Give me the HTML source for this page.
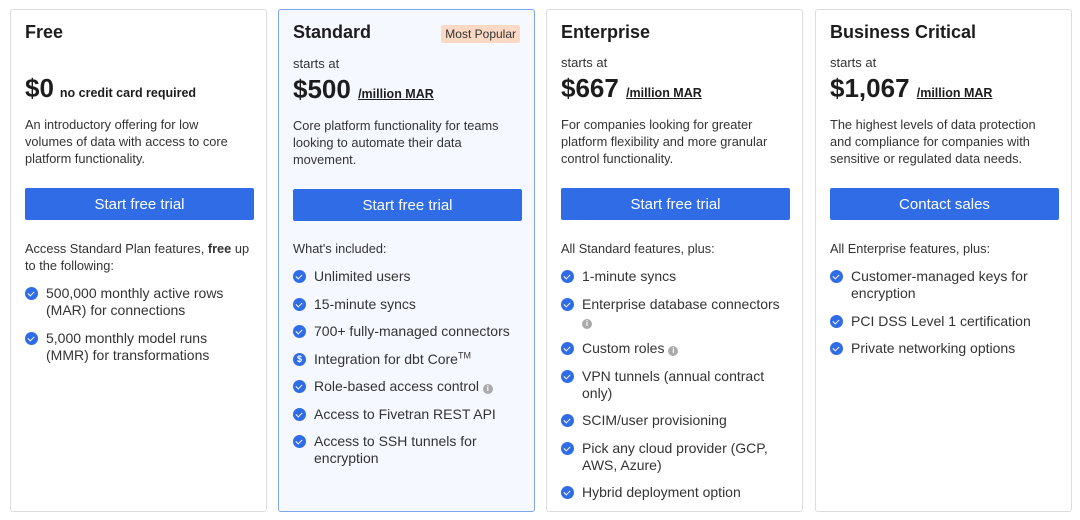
<!DOCTYPE html>
<html><head><meta charset="utf-8"><style>
*{margin:0;padding:0;box-sizing:border-box}
body{width:1080px;height:520px;background:#fff;font-family:"Liberation Sans",sans-serif;color:#222;position:relative;overflow:hidden}
.card{position:absolute;top:9px;width:257px;height:503px;border:1px solid #dcdcdc;border-radius:3px;background:#fff}
.card.pop{background:#f5f8fe;border-color:#7ea6ee}
.card>*{position:absolute;left:14px}
.t{top:12px;font-size:18px;font-weight:bold;color:#1d1d1d}
.sa{top:46px;font-size:13px;color:#333}
.pr{top:64px;font-size:26px;font-weight:bold;color:#1d1d1d;white-space:nowrap}
.pr small{font-size:12.5px;font-weight:bold;margin-left:6px}
.pr u{font-size:12.5px}
.d{top:106px;width:222px;font-size:12.8px;line-height:17px;color:#333}
.b{top:178px;width:229px;height:32px;background:#2f6ce5;color:#fff;border-radius:2px;font-size:15px;text-align:center;line-height:34px}
.h{top:230px;width:232px;font-size:12.8px;line-height:17px;color:#333}
ul{list-style:none;width:222px;font-size:14px;line-height:17px;color:#333}
li{position:relative;padding-left:21px;margin-bottom:10.5px}
li:before{content:"";position:absolute;left:0;top:2px;width:13px;height:13px;border-radius:50%;background:#2f6ce5}
li:after{content:"";position:absolute;left:4px;top:5px;width:3px;height:5px;border:solid #fff;border-width:0 1.6px 1.6px 0;transform:rotate(45deg)}
li.dol:after{content:"$";border:0;transform:none;color:#fff;font-size:9px;font-weight:bold;left:4px;top:2px;width:auto;height:auto;line-height:13px}
sup{font-size:9px;line-height:0}
.i{display:inline-block;width:10px;height:10px;border-radius:50%;background:#aaa;color:#fff;font-size:8px;line-height:10px;text-align:center;font-weight:bold;vertical-align:0}
.badge{left:auto!important;right:14px;top:15px;background:#fbd9c4;font-size:12px;padding:2px 4px;border-radius:2px;color:#333}
</style></head><body>
<div class="card" style="left:10px">
<div class="t">Free</div>
<div class="pr" style="top:63px">$0<small>no credit card required</small></div>
<div class="d">An introductory offering for low volumes of data with access to core platform functionality.</div>
<div class="b">Start free trial</div>
<div class="h">Access Standard Plan features, <b>free</b> up to the following:</div>
<ul style="top:275px;width:212px"><li>500,000 monthly active rows (MAR) for connections</li><li>5,000 monthly model runs (MMR) for transformations</li></ul>
</div>
<div class="card pop" style="left:278px">
<div class="t">Standard</div><div class="badge">Most Popular</div>
<div class="sa">starts at</div>
<div class="pr">$500 <u>/million MAR</u></div>
<div class="d" style="top:107px">Core platform functionality for teams looking to automate their data movement.</div>
<div class="b" style="top:179px">Start free trial</div>
<div class="h">What's included:</div>
<ul style="top:258px"><li>Unlimited users</li><li>15-minute syncs</li><li>700+ fully-managed connectors</li><li class="dol">Integration for dbt Core<sup>TM</sup></li><li>Role-based access control <span class="i">i</span></li><li>Access to Fivetran REST API</li><li>Access to SSH tunnels for encryption</li></ul>
</div>
<div class="card" style="left:546px">
<div class="t">Enterprise</div>
<div class="sa" style="top:45px">starts at</div>
<div class="pr" style="top:63px">$667 <u>/million MAR</u></div>
<div class="d">For companies looking for greater platform flexibility and more granular control functionality.</div>
<div class="b">Start free trial</div>
<div class="h">All Standard features, plus:</div>
<ul style="top:258px"><li>1-minute syncs</li><li>Enterprise database connectors <span class="i">i</span></li><li>Custom roles <span class="i">i</span></li><li>VPN tunnels (annual contract only)</li><li>SCIM/user provisioning</li><li>Pick any cloud provider (GCP, AWS, Azure)</li><li>Hybrid deployment option</li></ul>
</div>
<div class="card" style="left:815px">
<div class="t">Business Critical</div>
<div class="sa" style="top:45px">starts at</div>
<div class="pr" style="top:63px">$1,067 <u>/million MAR</u></div>
<div class="d">The highest levels of data protection and compliance for companies with sensitive or regulated data needs.</div>
<div class="b">Contact sales</div>
<div class="h">All Enterprise features, plus:</div>
<ul style="top:258px"><li>Customer-managed keys for encryption</li><li>PCI DSS Level 1 certification</li><li>Private networking options</li></ul>
</div>
</body></html>
